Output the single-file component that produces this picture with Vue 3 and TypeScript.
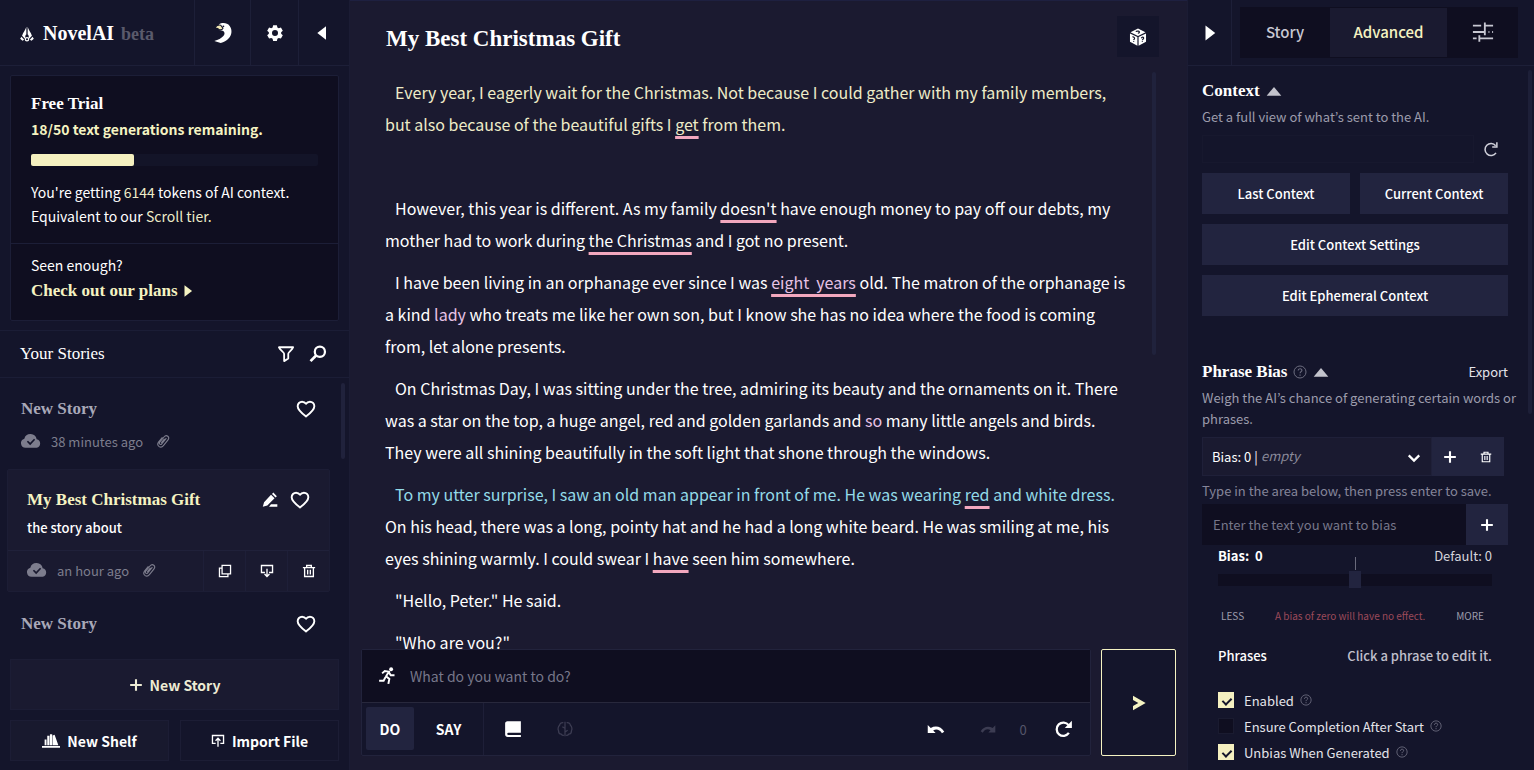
<script setup lang="ts">
import { ref } from 'vue'

const icons: Record<string, string> = {
  nib: '<path d="M11 1C9.800 6 6.200 9 4.600 14.500l4.600 5c.5-2.200-.2-3.400.5-5.200.3-.8.900-1.100 1.300-1.400z"/><path d="M13 1c1.200 5 4.800 8 6.400 13.500l-4.600 5c-.5-2.200.2-3.400-.5-5.200-.3-.8-.9-1.100-1.300-1.400z"/><path d="M3.600 16.200l4.200 4.400-2.600 1.400-3.400-2.800z"/><path d="M20.400 16.200l-4.200 4.400 2.600 1.400 3.400-2.800z"/><circle cx="12" cy="19.800" r="2.500" fill="none" stroke="currentColor" stroke-width="1.800"/>',
  goose: '<path d="M7.500 2.600C11 .3 16.500.6 19.300 4.300c3 4 2.500 10-1 13.500-2.500 2.600-5.400 4.400-8.800 5.200L2.500 20.600c4.200-1.200 7.800-3 9.900-5.400 1.700-2.100 1.600-3.700.2-5.200C11.300 8.900 9.500 9 7.800 8.600z"/><path d="M9.500 3.600C7 2.900 4.600 3.900 3.300 6.600c2-.4 3.300.2 4.700 1.900 1.800.3 3.400-.3 4-1.600z" fill="#f3e9b4" stroke="#15162c" stroke-width="1.100"/><circle cx="12.400" cy="4.700" r="1" fill="#15162c"/>',
  gear: '<path fill-rule="evenodd" d="M9.500 1.500h5l.7 3 1.800 1 2.900-.9 2.500 4.300-2.200 2.100v2l2.200 2.100-2.500 4.300-2.900-.9-1.800 1-.7 3h-5l-.7-3-1.800-1-2.900.9-2.500-4.300L3.800 13v-2L1.600 8.900l2.500-4.300 2.900.9 1.800-1zM12 8a4 4 0 100 8 4 4 0 000-8z"/>',
  left: '<path d="M18 2v20L5 12z"/>',
  right: '<path d="M6 2v20l13-10z"/>',
  up: '<path d="M1 19L12 6l11 13z"/>',
  funnel: '<path d="M2.500 3h19c-1.500 4.200-6.500 6.300-6.500 8.800v6.200l-5.500 3.500v-9.700c0-2.500-5.500-4.600-7-8.800z" fill="none" stroke="currentColor" stroke-width="2.400" stroke-linejoin="round"/>',
  search: '<circle cx="14.500" cy="9" r="6.800" fill="none" stroke="currentColor" stroke-width="3"/><path d="M9.500 14l-7.500 7.500" stroke="currentColor" stroke-width="3.600"/>',
  heart: '<path d="M12 21C8.500 18.300 2 13.600 2 8.800 2 5.600 4.400 3.300 7.300 3.300c2 0 3.700 1 4.700 2.500 1-1.500 2.700-2.500 4.700-2.500 2.900 0 5.300 2.300 5.300 5.500 0 4.800-6.500 9.500-10 12.200z" fill="none" stroke="currentColor" stroke-width="2.300" stroke-linejoin="round"/>',
  cloud: '<path fill-rule="evenodd" d="M5.500 20A5.500 5.500 0 014 9.200 7.600 7.600 0 0118.800 9.800 5.200 5.200 0 0118.800 20zM7 13l4 4 6-6.500-1.400-1.300-4.600 4.900-2.600-2.500z"/>',
  clip: '<path d="M17.800 7l-8 9.800c-1 1.200-2.400 1.300-3.300.6s-1-2.100-.1-3.300l7.300-9c2-2.400 4.600-2.700 6.500-1.200 1.900 1.600 2 4.300.1 6.700L12.700 20c-2.200 2.700-5.400 3-7.700 1.200-2.300-1.900-2.500-5.100-.4-7.800L11 5.600M14.600 8.500L9 15.300" fill="none" stroke="currentColor" stroke-width="1.900"/>',
  pen: '<path d="M13.500 4.200l5.300 5.300L8 20.300l-6.800 1.900 1.900-6.900zM15 2.900L17 .9l5.300 5.300-2 2zM13.500 18.300h9.500v3.900H10.500z"/>',
  copy: '<path d="M7 2.500h14.500V17H7zM7 7H2.500v14.500H17V17" fill="none" stroke="currentColor" stroke-width="2.200"/>',
  export: '<path d="M8.500 14.500H2.500v-12h19v12h-6M12 8v12M7.800 17.200L12 21.500l4.200-4.300" fill="none" stroke="currentColor" stroke-width="2.300"/>',
  import: '<path d="M8 16H2.500V2.500h19V16H16M12 22V8M7.800 11.500L12 7.200l4.200 4.300" fill="none" stroke="currentColor" stroke-width="2.300"/>',
  trash: '<path d="M1.500 6.200h21M8 6V2.500h8V6M4.500 6.500V21.500h15V6.500M9.700 10v8M14.300 10v8" fill="none" stroke="currentColor" stroke-width="2.300"/>',
  plus: '<path d="M12 2v20M2 12h20" fill="none" stroke="currentColor" stroke-width="3.600"/>',
  shelf: '<path d="M0 18.500h24V21H0zM3.500 10H6v7.500H3.500zM7 5h3v12.500H7zM10.600 3h3v14.500h-3zM14.200 4.500l2.600-.8 5 13.800h-7.600z"/>',
  run: '<circle cx="17.500" cy="3" r="2.600"/><path d="M5.500 8.500L9 5.300l5.500.9-3.700 6.300 4.300 3.500-1.300 6.500M14.500 7l2.500 4h5M10 13.500L7.500 18.200H1.500" fill="none" stroke="currentColor" stroke-width="2.600"/>',
  book: '<path d="M4.500 1.500h18v15.500H5.800a1.500 1.500 0 000 3h16.700v2.500H4.800C3 22.500 1.500 21 1.500 19.200V4.500c0-1.700 1.300-3 3-3z"/>',
  brain: '<path d="M12 1v22M9.500 2.300C6 2 4 3.800 3.900 6.500 1.500 8.500 1 12.500 2.300 14.500c0 3 1.800 5 4 5.300 1.200 1.700 2.600 2 4 1.800M14.500 2.300c3.500-.3 5.500 1.500 5.600 4.200 2.400 2 2.900 6 1.600 8 0 3-1.800 5-4 5.300-1.200 1.700-2.600 2-4 1.800M8 8.500L12 11M16 14l-4 2.500" fill="none" stroke="currentColor" stroke-width="1.900"/>',
  undo: '<path d="M1 6.500v10.700h10.500L8.200 13.900c4.200-2.700 8.700-1.400 11.700 3.600l3.100-2C19 8.800 11.700 6.800 5 10.600z"/>',
  redo: '<path d="M23 6.500v10.700H12.500l3.300-3.300C11.600 11.200 7.100 12.500 4.100 17.500l-3.100-2C5 8.800 12.300 6.800 19 10.600z"/>',
  reload: '<path d="M18.500 17.300A8.900 8.900 0 1118.200 6.800" fill="none" stroke="currentColor" stroke-width="3"/><path d="M22.500 1v9.500H13z"/>',
  reloadThin: '<path d="M19.500 17.800A9 9 0 1119 7" fill="none" stroke="currentColor" stroke-width="2.300"/><path d="M20.800 2v7h-7" fill="none" stroke="currentColor" stroke-width="2.300"/>',
  dice: '<path d="M12 .5l10 5.200-10 5L2 5.700zM1.300 7.200l9.900 4.900v11.400L1.300 18.200zM22.700 7.200l-9.900 4.900v11.400l9.900-5.300z"/><g fill="none" stroke="#14152b" stroke-width="1.600"><path d="M9 4.800c2-1.400 5.600-.6 4.800 1-.4.700-1.300.7-1.600 1.400"/><path d="M4.600 11.800c1.700-.4 3.300 1.300 2.700 2.700-.3.700-1 .7-1.100 1.700M6.200 17.600v1.200M16.400 13.600c.8-1.500 2.900-1.900 3.100-.3.200 1.300-1.500 1.500-1.700 3.100M17.800 17.600v1.200"/></g>',
  sliders: '<path d="M1 5h9M14 5h9M14 1.500v7M1 12h13M14 8.500v7M18 12h1M22 12h1M1 19h4M9 19h14M8 15.500v7" fill="none" stroke="currentColor" stroke-width="2"/>',
  help: '<circle cx="12" cy="12" r="10.300" fill="none" stroke="currentColor" stroke-width="1.700"/><path d="M8.800 9.600c0-4.200 6.500-4.200 6.500-.5 0 2.300-3.200 2.500-3.200 5.200M12.100 16.300v2.200" fill="none" stroke="currentColor" stroke-width="1.900"/>',
  chevron: '<path d="M3 7.500l9 9 9-9" fill="none" stroke="currentColor" stroke-width="3.800"/>',
  send: '<path d="M3 1l19 11L3 23v-6.500l8-4.500-8-4.500z"/>',
}

const used = 18
const total = 50
const prompt = ref('')
const phrase = ref('')
const bias = ref(0)
const options = ref([
  { id: 'enabled', label: 'Enabled', on: true },
  { id: 'ensure', label: 'Ensure Completion After Start', on: false },
  { id: 'unbias', label: 'Unbias When Generated', on: true },
])
</script>

<template>
  <div class="app">
    <aside class="side">
      <header class="bar">
        <div class="brand">
          <svg class="i16 nib" viewBox="0 0 24 24" v-html="icons.nib" />
          <span class="logo">NovelAI</span><span class="beta">beta</span>
        </div>
        <button class="cell c-goose" aria-label="Account"><svg class="i22" viewBox="0 0 24 24" v-html="icons.goose" /></button>
        <button class="cell c-gear" aria-label="Settings"><svg class="i18" viewBox="0 0 24 24" v-html="icons.gear" /></button>
        <button class="cell c-fold" aria-label="Collapse"><svg class="i16" viewBox="0 0 24 24" v-html="icons.left" /></button>
      </header>

      <section class="trial">
        <div class="trial-top">
          <h2 class="serif t17">Free Trial</h2>
          <p class="count">{{ used }}/{{ total }} text generations remaining.</p>
          <div class="meter"><div class="fill" :style="{ width: (used / total) * 100 + '%' }"></div></div>
          <p class="info">You're getting <span class="pale">6144</span> tokens of AI context.<br />Equivalent to our <span class="pale">Scroll tier.</span></p>
        </div>
        <div class="trial-bottom">
          <p>Seen enough?</p>
          <a href="#" class="serif plans">Check out our plans <svg class="i14" viewBox="0 0 24 24" v-html="icons.right" /></a>
        </div>
      </section>

      <div class="stories-head">
        <h2 class="serif">Your Stories</h2>
        <button aria-label="Filter"><svg class="i18" viewBox="0 0 24 24" v-html="icons.funnel" /></button>
        <button aria-label="Search"><svg class="i18" viewBox="0 0 24 24" v-html="icons.search" /></button>
      </div>

      <div class="list">
        <div class="thumb"></div>
        <article class="story">
          <div class="row"><h3 class="serif">New Story</h3><button aria-label="Favourite"><svg class="i20" viewBox="0 0 24 24" v-html="icons.heart" /></button></div>
          <div class="meta">
            <svg class="i20" viewBox="0 0 24 24" v-html="icons.cloud" /><span>38 minutes ago</span><svg class="i14" viewBox="0 0 24 24" v-html="icons.clip" />
          </div>
        </article>
        <article class="active">
          <div class="a-top">
            <div class="row">
              <h3 class="serif">My Best Christmas Gift</h3>
              <button aria-label="Rename"><svg class="i16" viewBox="0 0 24 24" v-html="icons.pen" /></button>
              <button aria-label="Favourite"><svg class="i20" viewBox="0 0 24 24" v-html="icons.heart" /></button>
            </div>
            <p>the story about</p>
          </div>
          <div class="a-foot">
            <div class="meta">
              <svg class="i20" viewBox="0 0 24 24" v-html="icons.cloud" /><span>an hour ago</span><svg class="i14" viewBox="0 0 24 24" v-html="icons.clip" />
            </div>
            <button aria-label="Duplicate"><svg class="i14" viewBox="0 0 24 24" v-html="icons.copy" /></button>
            <button aria-label="Export"><svg class="i14" viewBox="0 0 24 24" v-html="icons.export" /></button>
            <button aria-label="Delete"><svg class="i14" viewBox="0 0 24 24" v-html="icons.trash" /></button>
          </div>
        </article>
        <article class="story">
          <div class="row"><h3 class="serif">New Story</h3><button aria-label="Favourite"><svg class="i20" viewBox="0 0 24 24" v-html="icons.heart" /></button></div>
        </article>
      </div>

      <footer class="actions">
        <button class="new"><svg class="i14" viewBox="0 0 24 24" v-html="icons.plus" />New Story</button>
        <div class="pair">
          <button class="shelf"><svg class="i18" viewBox="0 0 24 24" v-html="icons.shelf" />New Shelf</button>
          <button class="import"><svg class="i14" viewBox="0 0 24 24" v-html="icons.import" />Import File</button>
        </div>
      </footer>
    </aside>

    <main class="main">
      <header class="m-head">
        <h1 class="serif">My Best Christmas Gift</h1>
        <button class="dice" aria-label="Random"><svg class="i18" viewBox="0 0 24 24" v-html="icons.dice" /></button>
      </header>
      <div class="editor">
        <div class="thumb"></div>
        <p class="pale">Every year, I eagerly wait for the Christmas. Not because I could gather with my family members, but also because of the beautiful gifts I <u>get</u> from them.</p>
        <p>&nbsp;</p>
        <p>However, this year is different. As my family <u>doesn't</u> have enough money to pay off our debts, my mother had to work during <u>the Christmas</u> and I got no present.</p>
        <p>I have been living in an orphanage ever since I was <u class="pink">eight&nbsp; years</u> old. The matron of the orphanage is a kind <span class="pink">lady</span> who treats me like her own son, but I know she has no idea where the food is coming from, let alone presents.</p>
        <p>On Christmas Day, I was sitting under the tree, admiring its beauty and the ornaments on it. There was a star on the top, a huge angel, red and golden garlands and <span class="pink">so</span> many little angels and birds. They were all shining beautifully in the soft light that shone through the windows.</p>
        <p><span class="blue">To my utter surprise, I saw an old man appear in front of me. He was wearing <u>red</u> and white dress.</span> On his head, there was a long, pointy hat and he had a long white beard. He was smiling at me, his eyes shining warmly. I could swear I <u>have</u> seen him somewhere.</p>
        <p>"Hello, Peter." He said.</p>
        <p>"Who are you?"</p>
      </div>
      <div class="compose">
        <div class="box">
          <label class="ask">
            <svg class="i18" viewBox="0 0 24 24" v-html="icons.run" />
            <input v-model="prompt" type="text" placeholder="What do you want to do?" aria-label="Action" />
          </label>
          <div class="tools">
            <div class="modes"><button class="on">DO</button><button>SAY</button></div>
            <button class="t-book" aria-label="Lorebook"><svg class="i18" viewBox="0 0 24 24" v-html="icons.book" /></button>
            <button class="dim" aria-label="Memory"><svg class="i16" viewBox="0 0 24 24" v-html="icons.brain" /></button>
            <span class="grow"></span>
            <button aria-label="Undo"><svg class="i18" viewBox="0 0 24 24" v-html="icons.undo" /></button>
            <button class="dim" aria-label="Redo"><svg class="i16" viewBox="0 0 24 24" v-html="icons.redo" /></button>
            <span class="zero">0</span>
            <button aria-label="Retry"><svg class="i18" viewBox="0 0 24 24" v-html="icons.reload" /></button>
          </div>
        </div>
        <button class="send" aria-label="Send"><svg class="i16" viewBox="0 0 24 24" v-html="icons.send" /></button>
      </div>
    </main>

    <aside class="side right">
      <header class="bar">
        <button class="unfold" aria-label="Collapse"><svg class="i18" viewBox="0 0 24 24" v-html="icons.right" /></button>
        <nav class="tabs">
          <button>Story</button><button class="on">Advanced</button>
          <button aria-label="Options"><svg class="i22" viewBox="0 0 24 24" v-html="icons.sliders" /></button>
        </nav>
      </header>
      <div class="panel">
        <div class="thumb"></div>
        <h2 class="serif h">Context <svg class="i16 up" viewBox="0 0 24 24" v-html="icons.up" /></h2>
        <p class="desc">Get a full view of what’s sent to the AI.</p>
        <div class="ctx"><div class="slot"></div><button aria-label="Refresh"><svg class="i16" viewBox="0 0 24 24" v-html="icons.reloadThin" /></button></div>
        <div class="grid">
          <button class="btn">Last Context</button><button class="btn">Current Context</button>
          <button class="btn wide">Edit Context Settings</button>
          <button class="btn wide">Edit Ephemeral Context</button>
        </div>
        <h2 class="serif h bias-h">Phrase Bias <svg class="i14 help" viewBox="0 0 24 24" v-html="icons.help" /><svg class="i16 up" viewBox="0 0 24 24" v-html="icons.up" /><button class="exp">Export</button></h2>
        <p class="desc two">Weigh the AI’s chance of generating certain words or phrases.</p>
        <div class="pick">
          <div class="sel">
            <select aria-label="Bias group"><option>Bias: 0 |</option></select>
            <em>empty</em>
            <svg class="i14" viewBox="0 0 24 24" v-html="icons.chevron" />
          </div>
          <button aria-label="Add group"><svg class="i14" viewBox="0 0 24 24" v-html="icons.plus" /></button>
          <button aria-label="Delete group"><svg class="i12" viewBox="0 0 24 24" v-html="icons.trash" /></button>
        </div>
        <label class="hint" for="phrase">Type in the area below, then press enter to save.</label>
        <div class="entry">
          <input id="phrase" v-model="phrase" type="text" placeholder="Enter the text you want to bias" />
          <button aria-label="Add phrase"><svg class="i14" viewBox="0 0 24 24" v-html="icons.plus" /></button>
        </div>
        <div class="inset">
          <div class="between brow"><label class="strong" for="bias">Bias:&nbsp; {{ bias }}</label><i class="tick"></i><span class="def">Default: 0</span></div>
          <input id="bias" v-model.number="bias" class="range" type="range" min="-2" max="2" step="0.01" />
          <div class="between ends"><span>LESS</span><span class="warn">A bias of zero will have no effect.</span><span>MORE</span></div>
          <div class="between phr"><span>Phrases</span><span class="grey">Click a phrase to edit it.</span></div>
          <div v-for="o in options" :key="o.id" class="check">
            <input :id="o.id" v-model="o.on" type="checkbox" /><label :for="o.id">{{ o.label }}</label>
            <svg class="help h12" viewBox="0 0 24 24" v-html="icons.help" />
          </div>
        </div>
      </div>
    </aside>
  </div>
</template>

<style>
body { background: #14152b; }
</style>

<style scoped>
.app {
  display: grid; grid-template-columns: 350px minmax(0, 1fr) 347px; height: 100vh; overflow: hidden;
  font-family: "Noto Sans CJK KR", "Noto Sans", sans-serif; font-size: 14px; color: #fff; background: #14152b;
}
.app * { box-sizing: border-box; }
h1, h2, h3, p { margin: 0; font-size: inherit; font-weight: 400; }
button, input, select { font: inherit; color: inherit; border: 0; margin: 0; padding: 0; background: none; outline: 0; border-radius: 0; }
button { display: flex; align-items: center; justify-content: center; cursor: pointer; }
svg { fill: currentColor; flex: none; }
.serif { font-family: "Liberation Serif", serif; font-weight: 700; }
.i12 { width: 12px; height: 12px; } .i14 { width: 14px; height: 14px; } .i16 { width: 16px; height: 16px; }
.i18 { width: 18px; height: 18px; } .i20 { width: 20px; height: 20px; } .i22 { width: 22px; height: 22px; }
.pale { color: #eeecc8; }
.thumb { position: absolute; width: 4px; background: #20223c; border-radius: 2px; }

.side { display: flex; flex-direction: column; min-height: 0; border-right: 1px solid #1b1c34; }
.right { border-right: 0; border-left: 1px solid #1b1c34; }
.bar { display: flex; height: 66px; flex: none; border-bottom: 1px solid #1d1f38; }
.brand { flex: 1; display: flex; align-items: center; padding: 2px 0 0 19px; }
.nib { margin-right: 8px; }
.logo { font: 700 20px "Liberation Serif", serif; }
.beta { font: 700 18px "Liberation Serif", serif; color: #5a5a6b; margin-left: 7px; padding-top: 2px; }
.cell { border-left: 1px solid #1d1f38; }
.c-goose { width: 56px; } .c-gear { width: 48px; } .c-fold { width: 51px; padding-right: 4px; }

.trial { margin: 9px 10px; border: 1px solid #1c1e37; border-radius: 2px; background: #0f0e20; }
.trial-top { padding: 15px 20px; border-bottom: 1px solid #1c1e37; }
.t17 { font-size: 17px; line-height: 26px; }
.count { line-height: 24px; color: #f5f3c2; font-weight: 700; }
.meter { height: 12px; margin: 13px 0 14px; border-radius: 2px; background: #131428; }
.fill { height: 12px; border-radius: 2px; background: #f5f0c0; }
.info { line-height: 24px; }
.trial-bottom { padding: 8px 20px 16px; line-height: 26px; }
.plans { display: flex; align-items: center; gap: 3px; font-size: 17px; color: #f5f3c2; text-decoration: none; }

.stories-head { display: flex; align-items: center; gap: 14px; height: 48px; padding: 0 22px 0 20px; border: solid #1b1d36; border-width: 1px 0; flex: none; }
.stories-head h2 { flex: 1; font-size: 17px; font-weight: 400; }
.list { flex: 1; min-height: 0; overflow: hidden; position: relative; }
.list .thumb { right: 4px; top: 5px; height: 76px; }
.story { height: 91px; padding: 17px 33px 0 21px; }
.row { display: flex; align-items: center; height: 28px; gap: 12px; }
.row h3 { flex: 1; font-size: 17px; color: #a8a8b8; }
.meta { display: flex; align-items: center; height: 24px; color: #7d7d8d; font-size: 13px; }
.story .meta { margin-top: 6px; }
.meta span { margin: 0 13px 0 10px; }
.active { margin: 0 19px 1px 7px; background: #1a1a30; border: 1px solid #1c1d35; border-radius: 2px; }
.a-top { height: 80px; padding: 16px 19px 0; }
.active .row h3 { color: #f5f3c2; }
.a-top p { line-height: 28px; font-weight: 500; font-size: 13px; }
.a-foot { display: flex; height: 41px; border-top: 1px solid #20213a; }
.a-foot .meta { flex: 1; height: 38px; padding-left: 19px; }
.a-foot button { width: 42px; border-left: 1px solid #1e1f38; }

.actions { padding: 14px 10px 9px; font-weight: 700; font-size: 14px; }
.actions button { gap: 7px; border: 1px solid #1c1d35; }
.new { width: 100%; height: 51px; background: #1a1a30; color: #eeecd4; }
.pair { display: flex; gap: 11px; margin-top: 10px; }
.pair button { height: 41px; flex: 1; }
.shelf { background: #18192e; }

.main { display: flex; flex-direction: column; min-width: 0; min-height: 0; background: #1b1a30; border-top: 1px solid #1e2040; }
.m-head { display: flex; align-items: flex-start; justify-content: space-between; padding: 15px 28px 0 36px; }
.m-head h1 { padding-top: 2px; font-size: 23px; line-height: 41px; font-weight: 700; }
.dice { width: 42px; height: 41px; background: #14152b; }
.editor { flex: 1; min-height: 0; overflow: hidden; position: relative; margin-top: 13px; padding: 4px 57px 0 35px; font-size: 16px; line-height: 32px; }
.editor .thumb { right: 31px; top: 0; height: 283px; }
.editor p { margin-bottom: 10px; text-indent: 10px; }
u { text-decoration: underline 3px #f3a8be; text-underline-offset: 5px; text-decoration-skip-ink: none; }
.pink { color: #e7c3e6; }
.blue { color: #93dbe8; }
.compose { display: flex; gap: 10px; padding: 0 11px 14px; flex: none; }
.box { flex: 1; border: 1px solid #22233c; border-radius: 2px; background: #14152b; }
.ask { display: flex; align-items: center; gap: 14px; height: 53px; padding-left: 16px; background: #0f0e20; border-bottom: 1px solid #28283c; }
.ask input { flex: 1; height: 52px; font-size: 14px; }
input::placeholder { color: #77778a; opacity: 1; }
.tools { display: flex; align-items: center; height: 52px; }
.modes { display: flex; height: 52px; padding: 4px 0 4px 4px; border-right: 1px solid #1e1f38; font-weight: 700; font-size: 14px; }
.modes button { height: 43px; width: 48px; border-radius: 2px; }
.modes button + button { width: 69px; }
.modes .on { background: #22243f; }
.tools > button { width: 52px; height: 43px; }
.tools > .t-book { margin-left: 3px; }
.tools > .dim, .zero { color: #3c3c52; }
.zero { color: #55556a; width: 18px; margin-right: 6px; text-align: center; font-size: 13px; }
.grow { flex: 1; }
.send { width: 75px; border: 1px solid #f5f3c2; border-radius: 2px; background: #14152b; color: #f5f3c2; }

.unfold { width: 44px; border-right: 1px solid #1d1f38; }
.tabs { flex: 1; display: flex; margin: 7px 16px 7px 8px; height: 51px; padding: 1px 0; background: #0f0e20; font-size: 15px; font-weight: 500; color: #c8c8d2; }
.tabs button { flex: 90; padding-bottom: 2px; }
.tabs .on { flex: 117; background: #1a1a30; color: #f5f3c2; }
.tabs button:last-child { flex: 71; }
.panel { position: relative; flex: 1; min-height: 0; overflow: hidden; padding: 13px 26px 0 14px; font-size: 13px; }
.panel .thumb { right: 2px; top: 4px; height: 344px; background: #1d1f38; }
.h { display: flex; align-items: center; height: 24px; font-size: 17px; gap: 6px; }
.up { color: #c3c3cc; }
.help { color: #6d6d80; }
.desc { margin-top: 4px; line-height: 20px; color: #9c9cac; }
.ctx { display: flex; margin: 8px 0 10px; height: 28px; }
.slot { flex: 1; border: 1px solid #17182e; }
.ctx button { width: 34px; color: #d0d0da; }
.grid { display: grid; grid-template-columns: 1fr 1fr; gap: 10px; font-weight: 500; }
.btn { height: 41px; background: #22243f; }
.wide { grid-column: span 2; }
.bias-h { margin-top: 44px; }
.exp { margin-left: auto; font: 400 13px/20px "Noto Sans CJK KR", sans-serif; color: #e4e4ea; }
.desc.two { line-height: 21px; margin: 3px -12px 0 0; }
.pick { display: flex; height: 39px; margin: 8px 4px 0 0; }
.pick > button { width: 36px; background: #22243f; }
.sel { position: relative; flex: 1; background: #1a1a30; border: 1px solid #1f2039; }
.sel select { appearance: none; width: 100%; height: 37px; padding-left: 9px; }
.sel em { position: absolute; left: 58px; top: 8px; line-height: 20px; color: #8a8a9a; pointer-events: none; }
.sel svg { position: absolute; right: 10px; top: 13px; pointer-events: none; }
.hint { display: block; margin-top: 5px; line-height: 20px; color: #85859a; }
.entry { display: flex; height: 41px; margin-top: 3px; background: #0f0e20; }
.entry input { flex: 1; min-width: 0; padding-left: 11px; }
.entry button { width: 42px; background: #22243f; }
.inset { padding: 1px 16px 0; }
.between { display: flex; justify-content: space-between; }
.brow { line-height: 20px; position: relative; }
.strong { font-weight: 700; }
.def { color: #d4d4dc; }
.tick { position: absolute; left: 50%; top: 11px; width: 1px; height: 13px; background: #6a6a7c; }
.range { appearance: none; display: block; width: 100%; height: 18px; margin-top: 5px; }
.range::-webkit-slider-runnable-track { height: 12px; background: #0f0e20; }
.range::-webkit-slider-thumb { appearance: none; width: 12px; height: 17px; margin-top: -3px; background: #22243f; }
.ends { margin: 19px 0 22px; padding: 0 8px 0 3px; line-height: 16px; font-size: 10px; color: #9c9cac; }
.warn { color: #9c4a5a; }
.phr { line-height: 20px; margin-bottom: 21px; font-weight: 500; }
.grey { color: #c0c0cc; }
.check { display: flex; align-items: center; height: 26px; color: #e4e4ea; }
.check input { appearance: none; width: 16px; height: 16px; margin-right: 10px; background: #0f0e20; border: 1px solid #1a1b30; position: relative; }
.check input:checked { background: #f5f0c0; border-color: #f5f0c0; }
.check input:checked::after { content: ""; position: absolute; left: 5px; top: 3px; width: 4px; height: 7px; border: solid #14152b; border-width: 0 2px 2px 0; transform: rotate(45deg); }
.h12 { width: 12px; height: 12px; margin-left: 6px; }
</style>
